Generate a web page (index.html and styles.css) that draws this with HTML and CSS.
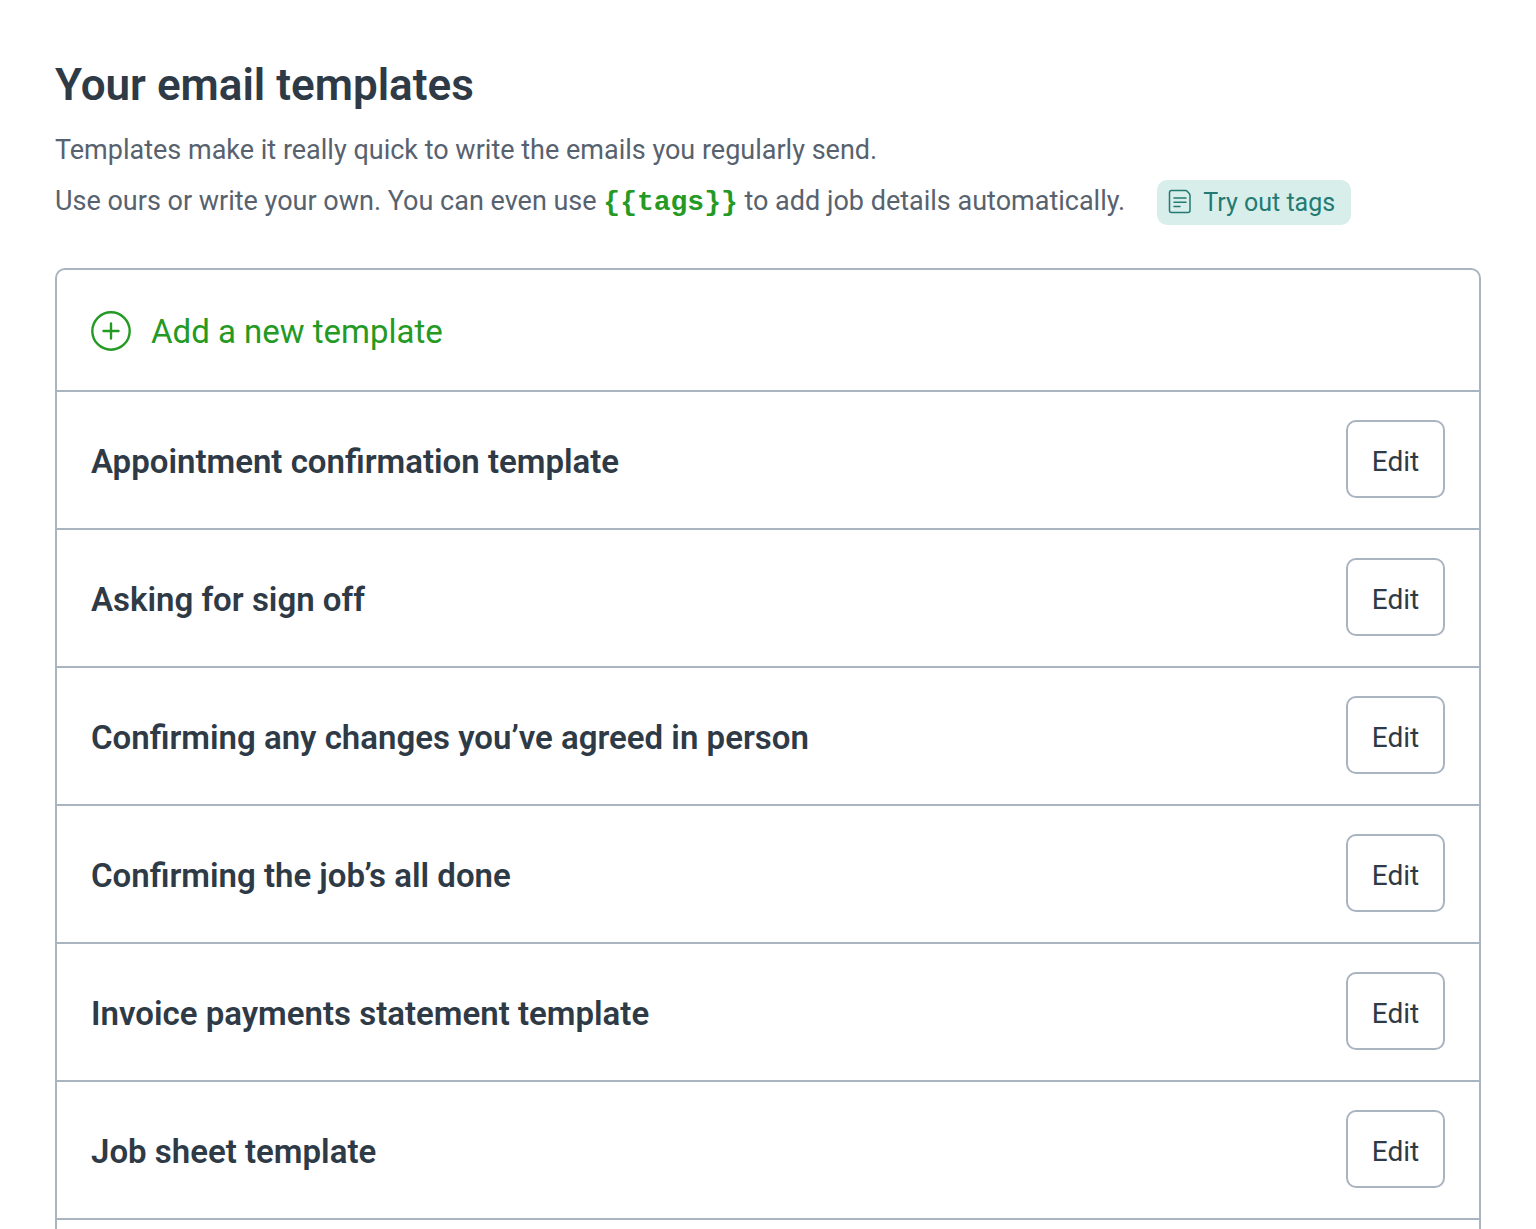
FILE: index.html
```html
<!DOCTYPE html>
<html lang="en">
<head>
    <meta charset="utf-8">
    <title>Your email templates</title>
    <link rel="stylesheet" href="styles.css">
</head>
<body>
    <main>
        <h1>Your email templates</h1>
        <p class="intro">Templates make it really quick to write the emails you regularly send.</p>
        <div class="intro intro-tags">
            <p>Use ours or write your own. You can even use <code>{{tags}}</code> to add job details automatically.</p>
            <button type="button" class="try-tags">
                <svg width="24" height="26" viewBox="0 0 24 26" fill="none" stroke="currentColor" stroke-width="1.5" stroke-linecap="round" stroke-linejoin="round" aria-hidden="true">
                    <path d="M3.5 1.5H17.5Q18.5 1.5 19.2 2.3L21.2 4.6Q22 5.5 22 6.5V21.5Q22 23.5 20 23.5H3.5Q1.5 23.5 1.5 21.5V3.5Q1.5 1.5 3.5 1.5Z"/>
                    <path d="M6 9H18M6 13.2H18M6 17.5H12"/>
                </svg>
                Try out tags
            </button>
        </div>

        <ul class="templates">
            <li>
                <button type="button" class="add-template">
                    <svg width="40" height="40" viewBox="0 0 40 40" fill="none" stroke="currentColor" stroke-width="2.4" stroke-linecap="round" aria-hidden="true">
                        <circle cx="20" cy="20" r="18.7"/>
                        <path d="M12.5 20H27.5M20 12.5V27.5"/>
                    </svg>
                    Add a new template
                </button>
            </li>
            <li>
                <h2>Appointment confirmation template</h2>
                <button type="button" class="edit">Edit</button>
            </li>
            <li>
                <h2>Asking for sign off</h2>
                <button type="button" class="edit">Edit</button>
            </li>
            <li>
                <h2>Confirming any changes you’ve agreed in person</h2>
                <button type="button" class="edit">Edit</button>
            </li>
            <li>
                <h2>Confirming the job’s all done</h2>
                <button type="button" class="edit">Edit</button>
            </li>
            <li>
                <h2>Invoice payments statement template</h2>
                <button type="button" class="edit">Edit</button>
            </li>
            <li>
                <h2>Job sheet template</h2>
                <button type="button" class="edit">Edit</button>
            </li>
            <li></li>
        </ul>
    </main>
</body>
</html>
```
FILE: styles.css
```css
body {
    margin: 0;
    background-color: #fff;
    color: #2f3a47;
    font-family: Roboto, "Liberation Sans", sans-serif;
    font-size: 27px;
}

main {
    padding: 56px 55px 0;
}

h1, h2, p {
    margin: 0;
}

h1 {
    font-size: 44px;
    font-weight: 600;
    line-height: 58px;
    margin-bottom: 11px;
}

button {
    box-sizing: border-box;
    font-family: inherit;
    font-size: 28px;
    color: inherit;
    background: none;
    border: none;
    padding: 0;
    cursor: pointer;
}

.intro {
    color: #57626e;
    line-height: 51px;
}

.intro-tags {
    display: flex;
    align-items: center;
    gap: 32px;
}

.intro code {
    color: #249a24;
    font-family: "Liberation Mono", monospace;
    font-size: 28px;
    font-weight: bold;
}

.try-tags {
    display: flex;
    align-items: center;
    gap: 11px;
    height: 45px;
    padding: 0 16px 0 11px;
    border-radius: 10px;
    background-color: #d8eeea;
    color: #237a73;
    font-size: 25px;
    white-space: nowrap;
}

.templates {
    list-style: none;
    margin: 40px 0 0;
    padding: 0;
    border: 2px solid #a9b4c1;
    border-radius: 10px;
}

.templates li {
    display: flex;
    align-items: center;
    justify-content: space-between;
    padding: 28px 34px 30px;
    border-bottom: 2px solid #a9b4c1;
}

.templates li:last-child {
    border-bottom: none;
}

.templates h2 {
    padding-top: 6px;
    font-size: 33px;
    font-weight: 600;
    line-height: 40px;
}

.add-template {
    display: flex;
    align-items: center;
    gap: 20px;
    height: 62px;
    padding-top: 4px;
    color: #249a24;
    font-size: 33px;
}

.edit {
    width: 99px;
    height: 78px;
    padding-top: 4px;
    border: 2px solid #a9b4c1;
    border-radius: 10px;
}
```
